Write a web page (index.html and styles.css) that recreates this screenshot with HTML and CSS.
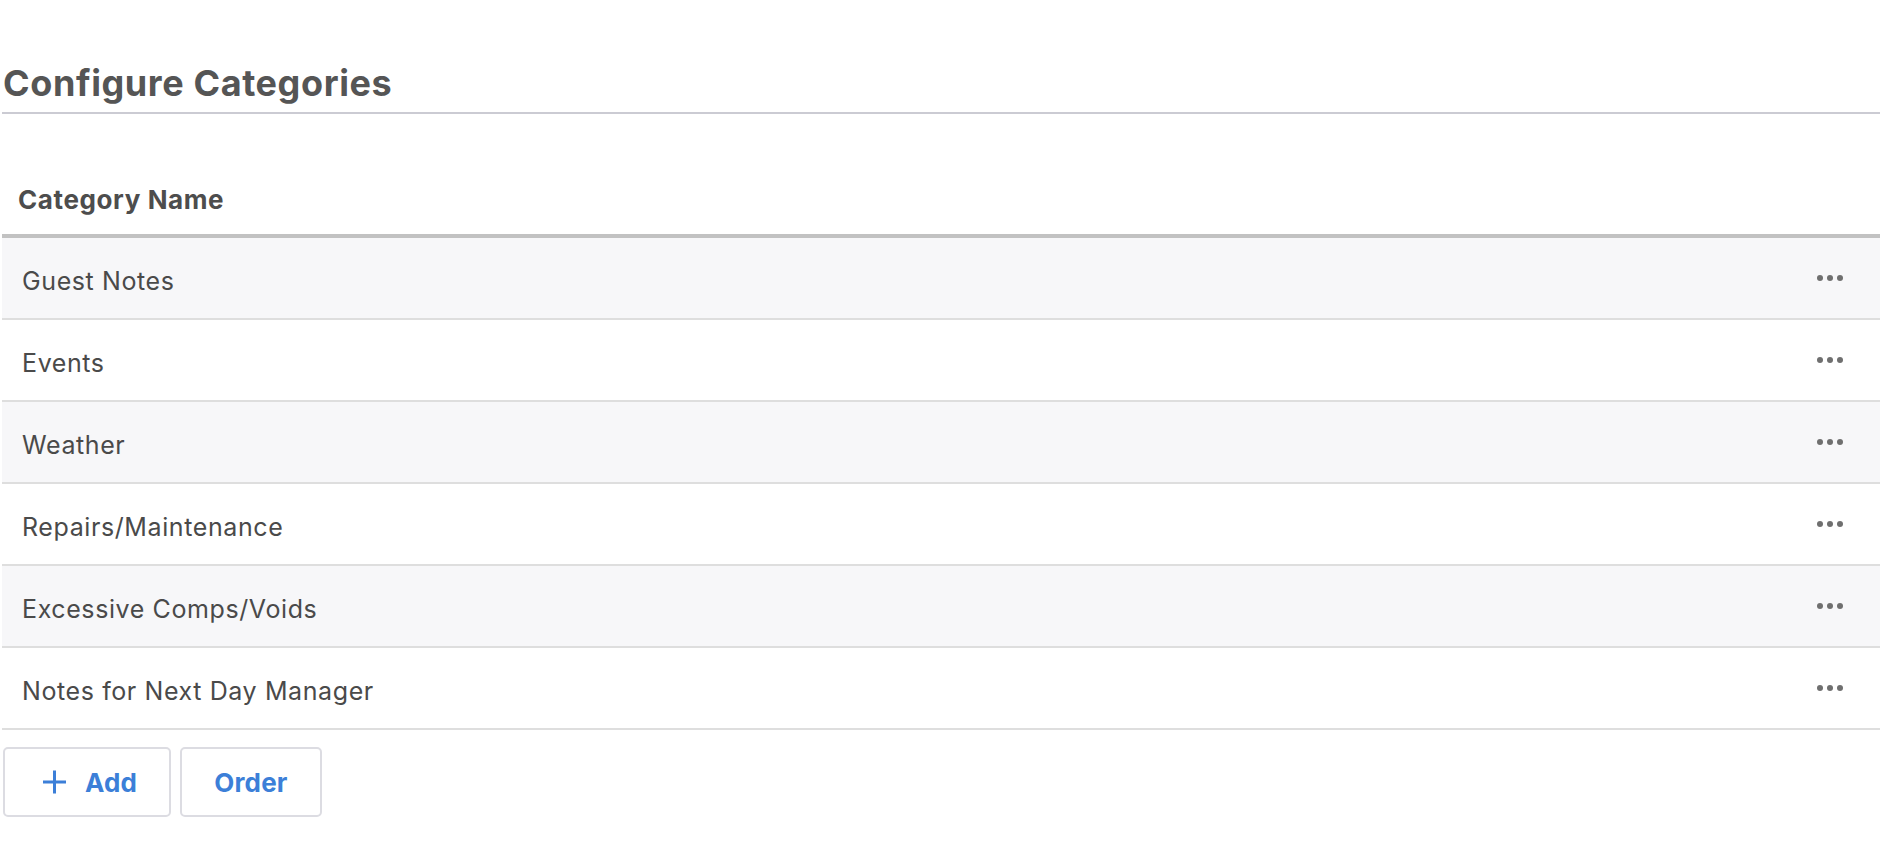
FILE: index.html
```html
<!DOCTYPE html>
<html lang="en">
<head>
<meta charset="utf-8">
<title>Configure Categories</title>
<link rel="stylesheet" href="styles.css">
</head>
<body>
<main class="page">
  <h1 class="page-title">Configure Categories</h1>
  <div class="table">
    <div class="table-head">Category Name</div>
    <div class="row alt"><span class="row-name">Guest Notes</span><span class="dots"><i></i><i></i><i></i></span></div>
    <div class="row"><span class="row-name">Events</span><span class="dots"><i></i><i></i><i></i></span></div>
    <div class="row alt"><span class="row-name">Weather</span><span class="dots"><i></i><i></i><i></i></span></div>
    <div class="row"><span class="row-name">Repairs/Maintenance</span><span class="dots"><i></i><i></i><i></i></span></div>
    <div class="row alt"><span class="row-name">Excessive Comps/Voids</span><span class="dots"><i></i><i></i><i></i></span></div>
    <div class="row"><span class="row-name">Notes for Next Day Manager</span><span class="dots"><i></i><i></i><i></i></span></div>
  </div>
  <div class="actions">
    <button class="btn"><svg class="plus" width="32" height="32" viewBox="0 0 32 32"><path d="M17.5 4.5v23M6 16h23" stroke="currentColor" stroke-width="3" fill="none"/></svg>Add</button>
    <button class="btn">Order</button>
  </div>
</main>
</body>
</html>
```
FILE: styles.css
```css
* { box-sizing: border-box; }
body {
  margin: 0;
  background: #fff;
  font-family: Inter, "Noto Sans", sans-serif;
  color: #4a4a4a;
}
.page {
  padding: 62px 0 0 2px;
}
.page-title {
  margin: 0;
  font-size: 36px;
  line-height: 42px;
  letter-spacing: 0.6px;
  font-weight: 700;
  color: #555;
  padding: 0 0 8px 1px;
  border-bottom: 2px solid #cbcbd3;
}
.table-head {
  height: 124px;
  padding: 0 0 19px 16px;
  display: flex;
  align-items: flex-end;
  font-size: 26px;
  letter-spacing: 0.6px;
  font-weight: 700;
  color: #4d4d4d;
  line-height: 30px;
  border-bottom: 4px solid #c2c2c2;
}
.row {
  height: 82px;
  display: flex;
  align-items: center;
  justify-content: space-between;
  padding: 0 37px 0 20px;
  border-bottom: 2px solid #dedede;
  font-size: 25px;
  letter-spacing: 0.6px;
  color: #4a4a4a;
}
.row.alt { background: #f7f7f9; }
.row-name { padding-top: 5px; }
.dots { display: flex; gap: 4px; }
.dots i {
  display: block;
  width: 6px;
  height: 6px;
  border-radius: 50%;
  background: #6f6f6f;
}
.actions {
  display: flex;
  gap: 9px;
  padding: 17px 0 0 1px;
}
.btn {
  height: 70px;
  padding: 0 32px;
  display: flex;
  align-items: center;
  gap: 16px;
  background: #fff;
  border: 2px solid #dcdce2;
  border-radius: 5px;
  font-family: inherit;
  font-size: 26px;
  letter-spacing: 0.2px;
  font-weight: 700;
  color: #3c7fd8;
}
.plus { display: block; }
```
